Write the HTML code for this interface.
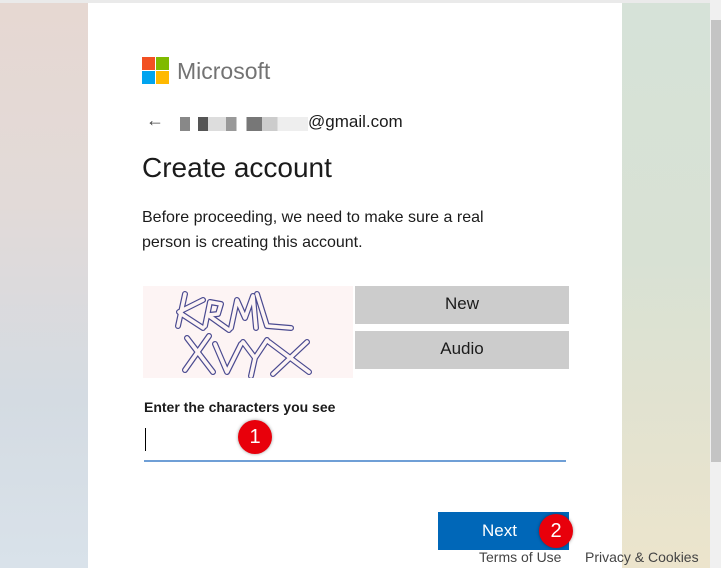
<!DOCTYPE html>
<html><head><meta charset="utf-8"><style>
body{margin:0;width:721px;height:568px;overflow:hidden;position:relative;font-family:"Liberation Sans",sans-serif;background:#fff}
.a{position:absolute}
.bgl{left:0;top:3px;width:88px;height:565px;background:linear-gradient(#e6d8d2,#e2dad8 35%,#d4dbe2 70%,#d9e2ea)}
.bgr{left:622px;top:3px;width:88px;height:565px;background:linear-gradient(#d6e2d8,#d8e1d4 45%,#ece4cc)}
.sb{left:710px;top:0;width:11px;height:568px;background:#f0f0f0}
.th{left:711px;top:20px;width:10px;height:442px;background:#c4c4c4}
.card{left:88px;top:3px;width:534px;height:565px;background:#fff}
.sq{width:13px;height:13px}
.badge{width:34px;height:34px;border-radius:50%;background:#e8000b;color:#fff;font-size:20px;text-align:center;line-height:34px;box-shadow:0 0 3px rgba(0,0,0,.4)}
.btn{background:#cccccc;color:#1b1b1b;font-size:17px;text-align:center}
</style></head><body>
<div class="a" style="left:0;top:0;width:721px;height:3px;background:#eaeaea"></div>
<div class="a bgl"></div><div class="a bgr"></div>
<div class="a sb"></div><div class="a th"></div>
<div class="a card"></div>
<div class="a sq" style="left:142px;top:57px;background:#f25022"></div>
<div class="a sq" style="left:156px;top:57px;background:#7fba00"></div>
<div class="a sq" style="left:142px;top:71px;background:#00a4ef"></div>
<div class="a sq" style="left:156px;top:71px;background:#ffb900"></div>
<div class="a" style="left:177px;top:58px;font-size:23px;color:#737373">Microsoft</div>
<div class="a" style="left:146px;top:110px;font-size:18px;color:#444">&larr;</div>
<div class="a" style="left:180px;top:117px;width:128px;height:14px;background:linear-gradient(90deg,#888 0 8%,#fff 8% 14%,#555 14% 22%,#ddd 22% 36%,#999 36% 44%,#fff 44% 52%,#777 52% 64%,#ccc 64% 76%,#eee 76%)"></div>
<div class="a" style="left:308px;top:112px;font-size:17px;color:#1b1b1b">@gmail.com</div>
<div class="a" style="left:142px;top:152px;font-size:28px;color:#1b1b1b">Create account</div>
<div class="a" style="left:142px;top:205px;font-size:16px;line-height:25px;color:#1b1b1b;width:385px">Before proceeding, we need to make sure a real person is creating this account.</div>
<div class="a" style="left:143px;top:286px;width:210px;height:92px;background:#fdf4f4">
<svg width="210" height="92" fill="none" stroke-linejoin="round" stroke-linecap="round">
<g stroke="#4a4a90" stroke-width="6">
<path d="M42 8 L35 40 M36 26 L60 14 M37 27 L60 42 M62 40 L67 16 L78 18 L75 28 L65 29 L86 44 M88 42 L94 14 L102 32 L110 10 L113 42 M114 8 L124 40 L148 42"/>
<path d="M44 52 L70 86 M66 50 L42 84 M72 58 L84 86 L98 58 M100 56 L112 72 L124 54 M112 72 L108 90 M126 56 L166 86 M164 56 L130 88"/>
</g>
<g stroke="#fdf4f4" stroke-width="3.6">
<path d="M42 8 L35 40 M36 26 L60 14 M37 27 L60 42 M62 40 L67 16 L78 18 L75 28 L65 29 L86 44 M88 42 L94 14 L102 32 L110 10 L113 42 M114 8 L124 40 L148 42"/>
<path d="M44 52 L70 86 M66 50 L42 84 M72 58 L84 86 L98 58 M100 56 L112 72 L124 54 M112 72 L108 90 M126 56 L166 86 M164 56 L130 88"/>
</g>
</svg></div>
<div class="a btn" style="left:355px;top:286px;width:214px;height:38px;line-height:36px">New</div>
<div class="a btn" style="left:355px;top:331px;width:214px;height:38px;line-height:36px">Audio</div>
<div class="a" style="left:144px;top:399px;font-size:14px;font-weight:bold;color:#1b1b1b">Enter the characters you see</div>
<div class="a" style="left:145px;top:428px;width:1px;height:23px;background:#000"></div>
<div class="a" style="left:144px;top:460px;width:422px;height:2px;background:#6f9fd6"></div>
<div class="a badge" style="left:238px;top:420px">1</div>
<div class="a" style="left:438px;top:512px;width:131px;height:38px;background:#0067b8;color:#fff;font-size:17px;line-height:38px;text-align:center;padding-right:8px;box-sizing:border-box">Next</div>
<div class="a badge" style="left:539px;top:514px">2</div>
<div class="a" style="left:479px;top:549px;font-size:14px;color:#444">Terms of Use</div>
<div class="a" style="left:585px;top:549px;font-size:14px;color:#444">Privacy &amp; Cookies</div>
</body></html>
